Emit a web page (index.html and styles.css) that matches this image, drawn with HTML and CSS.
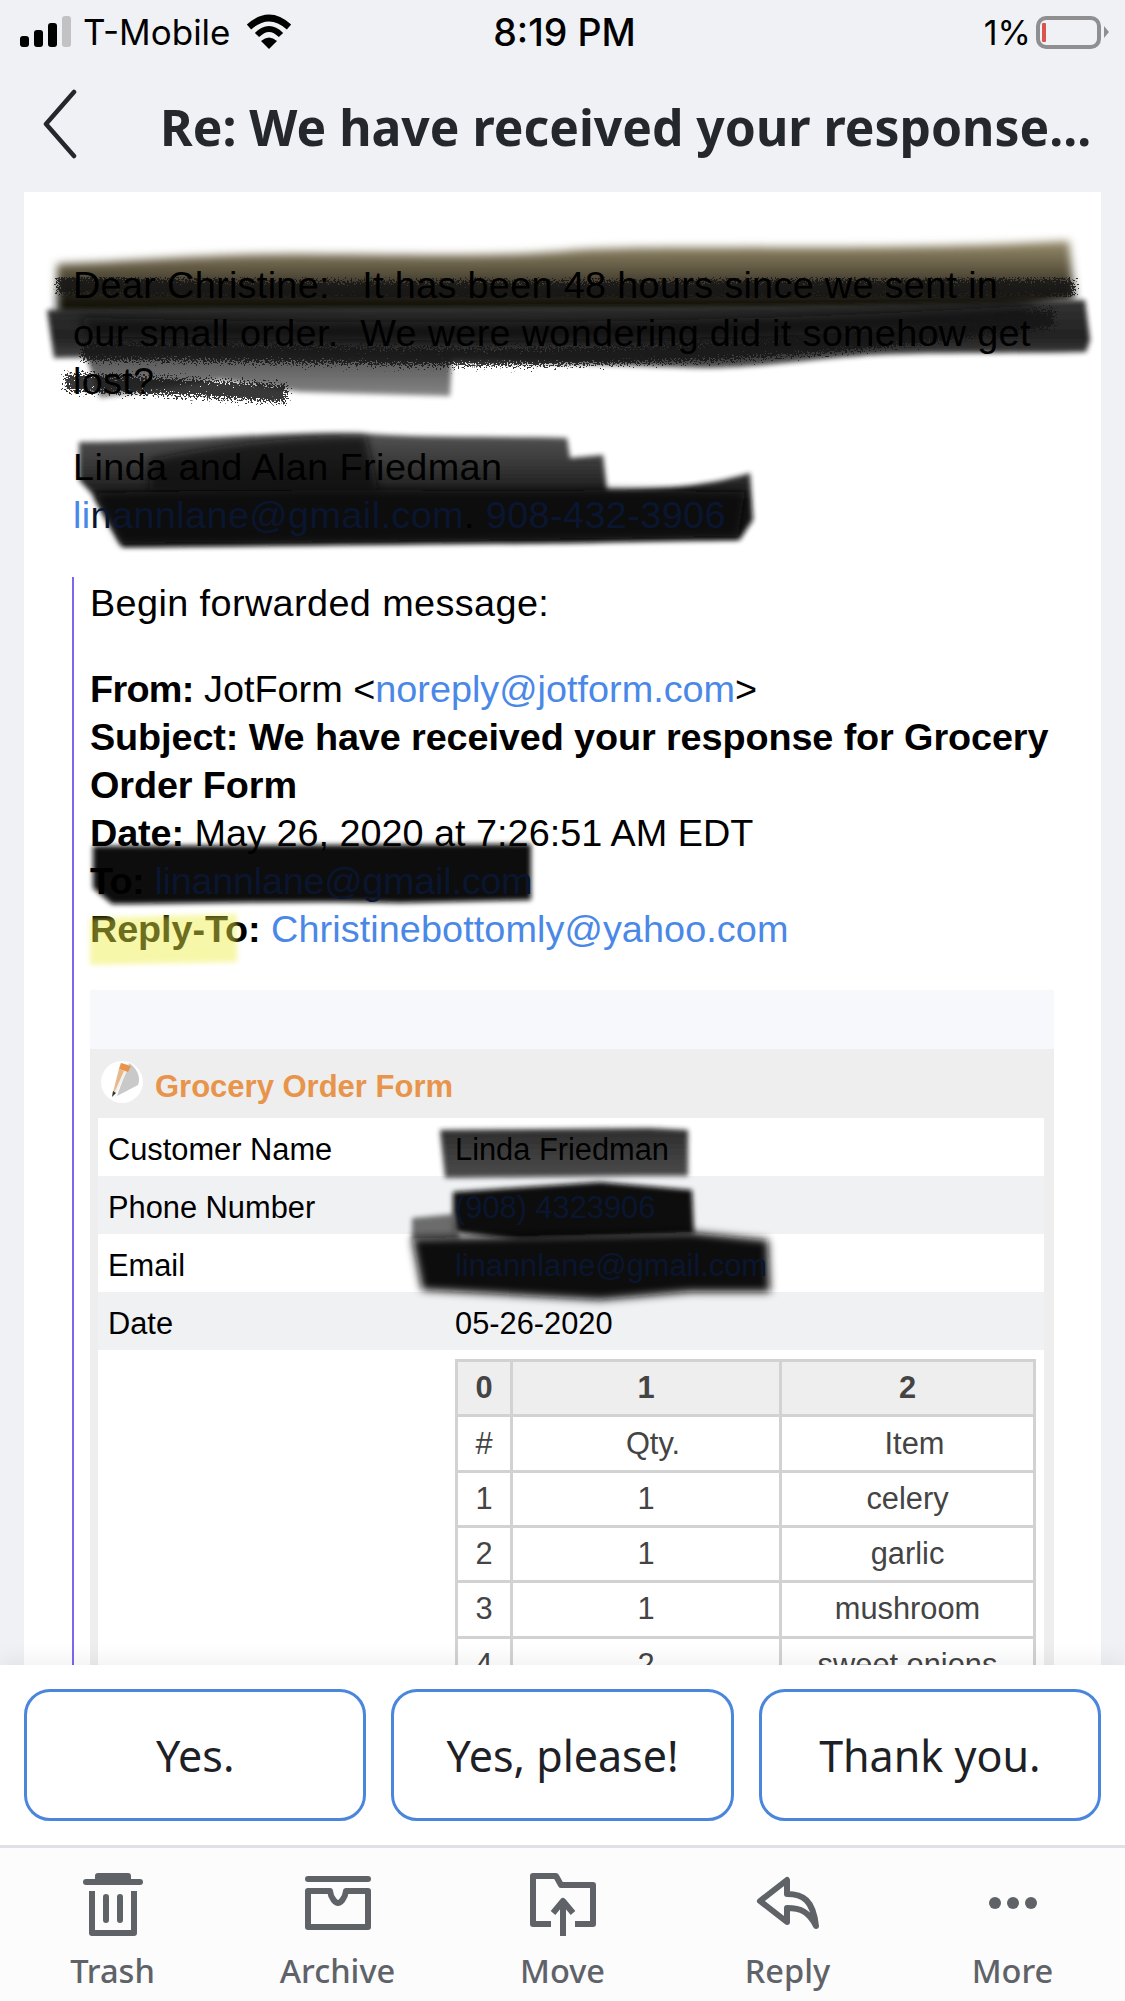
FILE: index.html
```html
<!DOCTYPE html>
<html lang="en">
<head>
<meta charset="utf-8">
<title>Re: We have received your response</title>
<link rel="stylesheet" href="styles.css">
</head>
<body>
<div class="page">
  <header class="status">
    <div class="status-left">
      <svg class="signal" viewBox="0 0 52 32"><rect x="0" y="20" width="9" height="11" rx="3"/><rect x="14" y="14" width="9" height="17" rx="3"/><rect x="28" y="7" width="9" height="24" rx="3"/><rect class="signal-off" x="42" y="0" width="9" height="31" rx="3"/></svg>
      <span class="carrier">T-Mobile</span>
      <svg class="wifi" viewBox="0 0 46 36"><path d="M3 13Q23 -5 43 13" fill="none" stroke="#000" stroke-width="6.5"/><path d="M11 21Q23 9 35 21" fill="none" stroke="#000" stroke-width="6"/><path d="M15 27Q23 20 31 27L23 35Z"/></svg>
    </div>
    <span class="clock">8:19 PM</span>
    <div class="status-right">
      <span class="percent">1%</span>
      <div class="battery"><span class="battery-level"></span></div>
      <span class="battery-nub"></span>
    </div>
  </header>

  <nav class="navbar">
    <svg class="back" viewBox="0 0 40 70"><path d="M34 3L6 35L34 67" fill="none" stroke="#24272b" stroke-width="4.5" stroke-linecap="round" stroke-linejoin="round"/></svg>
    <h1 class="subject">Re: We have received your response...</h1>
  </nav>

  <main class="card">
    <p class="para opening inked">Dear Christine:&nbsp;&nbsp;&nbsp;It has been 48 hours since we sent in<br>our small order.&nbsp;&nbsp;We were wondering did it somehow get<br>lost?</p>
    <p class="para plain sign"><span class="inked">Linda and Alan Friedman</span><br><a class="link">li</a><a class="inked link-dark">nannlane@gmail.com</a><span class="inked black">.</span><span class="inked link-dark"> 908-432-3906</span></p>
    <section class="quote">
      <p class="para plain begin">Begin forwarded message:</p>
      <p class="para headers"><b class="tight">From:</b> JotForm &lt;<a class="link">noreply@jotform.com</a>&gt;<br>
      <b>Subject: We have received your response for Grocery Order Form</b><br>
      <b class="inked">Date:</b> <span class="inked">May 26, 2020 at 7:26:51 AM EDT</span><br>
      <b class="inked tight">To:</b> <a class="inked link-dark narrow">linannlane@gmail.com</a><br>
      <b>Reply-To:</b> <a class="link wide">Christinebottomly@yahoo.com</a></p>
      <div class="form">
        <div class="form-strip"></div>
        <div class="form-body">
          <div class="form-head">
            <svg class="pencil" viewBox="0 0 44 44"><circle cx="22" cy="22" r="21" fill="#fff"/><path d="M29 3C37 8 41 17 38 25L17 36Z" fill="#c9c9c9"/><path d="M20 3L30 5L17 32L12 35Z" fill="#f4f1ec"/><path d="M21 3L31 6L28 12L19 9Z" fill="#e8944a"/><path d="M19 9L24 11L15 31L13 33Z" fill="#e6b98c"/><path d="M13 31L16 33L12 37Z" fill="#333"/></svg>
            <h2 class="form-title">Grocery Order Form</h2>
          </div>
          <div class="row"><span>Customer Name</span><span class="inked">Linda Friedman</span></div>
          <div class="row row-alt"><span>Phone Number</span><a class="inked link-dark">(908) 4323906</a></div>
          <div class="row"><span>Email</span><a class="inked link-dark">linannlane@gmail.com</a></div>
          <div class="row row-alt"><span>Date</span><span>05-26-2020</span></div>
          <div class="row row-table">
            <table class="items">
              <thead><tr><th class="col-n">0</th><th class="col-q">1</th><th>2</th></tr></thead>
              <tbody>
                <tr><td>#</td><td class="shift">Qty.</td><td class="shift">Item</td></tr>
                <tr><td>1</td><td>1</td><td>celery</td></tr>
                <tr><td>2</td><td>1</td><td>garlic</td></tr>
                <tr><td>3</td><td>1</td><td>mushroom</td></tr>
                <tr><td>4</td><td>2</td><td>sweet onions</td></tr>
              </tbody>
            </table>
          </div>
        </div>
      </div>
    </section>
  </main>

  <footer class="bottom">
    <div class="replies">
      <button class="chip">Yes.</button>
      <button class="chip">Yes, please!</button>
      <button class="chip">Thank you.</button>
    </div>
    <div class="toolbar">
      <div class="tool">
        <svg class="tool-icon" viewBox="0 0 70 70"><rect x="5" y="9" width="60" height="6" rx="3" class="solid"/><rect x="17" y="3" width="36" height="9" rx="3" class="solid"/><path d="M14 21V63H56V21" class="line"/><path d="M28 27V50M42 27V50" class="line round"/></svg>
        <span>Trash</span>
      </div>
      <div class="tool">
        <svg class="tool-icon" viewBox="0 0 70 70"><rect x="2" y="6" width="66" height="6" rx="3" class="solid"/><path d="M5 21H27C28 29 33 33 35 33C37 33 42 29 43 21H65V57H5Z" class="line"/></svg>
        <span>Archive</span>
      </div>
      <div class="tool">
        <svg class="tool-icon" viewBox="0 0 70 70"><path d="M23 54H5V6H28L33 15H65V54H47" class="line"/><path d="M35 66V31M25 43L35 31L45 43" class="line"/></svg>
        <span>Move</span>
      </div>
      <div class="tool">
        <svg class="tool-icon" viewBox="0 0 70 70"><path d="M7 31L34 10V24C50 24 60 30 63 56C56 42 48 38 34 38V52Z" class="line"/></svg>
        <span>Reply</span>
      </div>
      <div class="tool">
        <svg class="tool-icon" viewBox="0 0 70 70"><circle cx="17" cy="33" r="6" class="solid"/><circle cx="35" cy="33" r="6" class="solid"/><circle cx="53" cy="33" r="6" class="solid"/></svg>
        <span>More</span>
      </div>
    </div>
  </footer>

  <svg class="scribbles" viewBox="0 0 1125 2001" aria-hidden="true">
    <defs>
      <filter id="soft" x="-10%" y="-30%" width="120%" height="160%"><feGaussianBlur stdDeviation="2.5"/></filter>
      <filter id="soft2" x="-10%" y="-30%" width="120%" height="160%"><feGaussianBlur stdDeviation="4"/></filter>
      <filter id="soft3" x="-10%" y="-60%" width="120%" height="220%"><feGaussianBlur stdDeviation="6"/></filter>
      <filter id="rough" x="-5%" y="-100%" width="110%" height="300%">
        <feTurbulence type="fractalNoise" baseFrequency="0.55" numOctaves="2" seed="4"/>
        <feDisplacementMap in="SourceGraphic" scale="22" xChannelSelector="R" yChannelSelector="G"/>
      </filter>
      <linearGradient id="olive" gradientUnits="userSpaceOnUse" x1="0" y1="245" x2="0" y2="302">
        <stop offset="0" stop-color="#8f8465"/><stop offset=".45" stop-color="#5d5540"/><stop offset="1" stop-color="#14120c"/>
      </linearGradient>
      <linearGradient id="band" gradientUnits="userSpaceOnUse" x1="0" y1="300" x2="0" y2="368">
        <stop offset="0" stop-color="#2e2e2e"/><stop offset=".55" stop-color="#1c1c1c"/><stop offset="1" stop-color="#4a4a4a"/>
      </linearGradient>
      <linearGradient id="tail" gradientUnits="userSpaceOnUse" x1="0" y1="355" x2="0" y2="398">
        <stop offset="0" stop-color="#444"/><stop offset="1" stop-color="#7a7a7a"/>
      </linearGradient>
      <linearGradient id="name" gradientUnits="userSpaceOnUse" x1="0" y1="438" x2="0" y2="500">
        <stop offset="0" stop-color="#4a4a4a"/><stop offset="1" stop-color="#101010"/>
      </linearGradient>
      <linearGradient id="cell" gradientUnits="userSpaceOnUse" x1="0" y1="1128" x2="0" y2="1180">
        <stop offset="0" stop-color="#222"/><stop offset="1" stop-color="#444"/>
      </linearGradient>
    </defs>
    <path class="mark-tail" filter="url(#soft)" d="M84 350L452 352L450 396L300 392L220 380L100 398Z"/>
    <path class="mark-olive" filter="url(#soft2)" d="M57 264C120 262 190 255 287 254C400 254 500 258 574 250C640 246 700 248 746 247C860 248 980 246 1069 241L1075 300L1000 312L57 316Z"/>
    <path class="mark-band" filter="url(#soft)" d="M47 310C300 306 700 312 1085 300L1090 340L1086 352C1000 354 900 352 860 356C800 360 760 368 700 368C500 362 300 352 54 358Z"/>
    <path class="mark-streak" filter="url(#soft3)" d="M80 318C300 322 620 330 1030 306L1040 322C700 346 400 340 90 336Z"/>
    <path class="mark-speck" filter="url(#rough)" d="M58 284C300 296 800 286 1074 288"/>
    <path class="mark-speck" filter="url(#rough)" d="M82 352C300 350 420 364 700 352C850 346 950 330 1054 318"/>
    <path class="mark-speck" filter="url(#rough)" d="M66 382C120 384 200 388 286 394"/>
    <path class="mark-name" filter="url(#soft)" d="M79 442C180 442 280 430 370 434C440 438 510 436 567 438L570 458L603 455L607 490C650 490 700 488 750 473L753 520L739 540C650 540 560 544 490 543C370 544 240 546 122 547L93 495L79 480Z"/>
    <path class="mark-wedge" filter="url(#soft2)" d="M150 460C220 444 300 436 366 436L378 490L150 490Z"/>
    <path class="mark-solid" filter="url(#soft2)" d="M95 493C300 488 500 492 606 490L745 492L738 536C500 540 300 542 122 543Z"/>
    <path class="mark-solid" filter="url(#soft)" d="M93 846L531 844L531 900L400 903C300 900 200 904 112 904L93 888Z"/>
    <path class="mark-yellow" filter="url(#soft)" d="M90 918L237 914L237 962L90 965Z"/>
    <path class="mark-cell" filter="url(#soft)" d="M440 1130L650 1128L688 1130L688 1176L640 1176L445 1178Z"/>
    <path class="mark-solid" filter="url(#soft)" d="M453 1192L600 1182L692 1190L694 1234L520 1240L453 1232Z"/>
    <path class="mark-gray" filter="url(#soft)" d="M412 1218L455 1214L460 1240L412 1240Z"/>
    <path class="mark-solid" filter="url(#soft2)" d="M412 1238L690 1232L768 1240L770 1292L690 1292L600 1300L422 1290Z"/>
  </svg>
</div>
</body>
</html>
```
FILE: styles.css
```css
* { box-sizing: border-box; }
html, body { margin: 0; padding: 0; }
body { background: #f0f1f4; }

.page {
  position: relative;
  width: 1125px;
  height: 2001px;
  overflow: hidden;
  display: flex;
  flex-direction: column;
  background: #f0f1f4;
}

/* status bar */
.status {
  height: 64px;
  padding: 0 16px 0 20px;
  display: grid;
  grid-template-columns: 1fr auto 1fr;
  align-items: center;
  font-family: Inter, "Liberation Sans", sans-serif;
  color: #000;
  flex: none;
}
.status-left { display: flex; align-items: center; }
.signal { width: 52px; height: 32px; }
.signal-off { fill: #c2c2c4; }
.carrier { margin-left: 11px; font-size: 35px; }
.wifi { width: 46px; height: 36px; margin-left: 15px; }
.clock { font-size: 37.5px; font-weight: 500; }
.status-right { display: flex; align-items: center; justify-content: flex-end; }
.percent { font-size: 34px; margin-right: 5px; }
.battery {
  width: 65px;
  height: 33px;
  border: 4px solid #8f8f92;
  border-radius: 10px;
  padding: 3px 2px;
}
.battery-level { display: block; width: 4px; height: 100%; background: #d9534f; border-radius: 1px; }
.battery-nub {
  width: 0;
  height: 0;
  margin-left: 3px;
  border-left: 5px solid #8f8f92;
  border-top: 6px solid transparent;
  border-bottom: 6px solid transparent;
}

/* title bar */
.navbar {
  height: 128px;
  flex: none;
  display: flex;
  align-items: center;
  padding: 0 0 3px 40px;
}
.back { width: 40px; height: 70px; flex: none; margin: 0 80px 6px 0; }
.subject {
  margin: 0;
  font-family: "Noto Sans", "Open Sans", sans-serif;
  font-size: 49.8px;
  font-weight: 700;
  color: #24272b;
  white-space: nowrap;
}

/* message */
.card {
  flex: 1;
  min-height: 0;
  margin: 0 24px;
  padding: 69px 0 0 48px;
  background: #fff;
  overflow: hidden;
  font-family: "Liberation Sans", Arial, sans-serif;
  font-size: 37.8px;
  line-height: 48.1px;
  color: #000;
}
.para { margin: 0; padding-left: 1px; }
.plain { letter-spacing: .4px; }
.opening { letter-spacing: .32px; }
.sign { margin-top: 38px; }
.link { color: #4a88e8; }
.inked { position: relative; z-index: 2; }
.link-dark { color: #0a1630; }
.black { color: #000; }
.quote {
  margin-top: 38px;
  padding: 2px 0 0 16px;
  border-left: 2px solid #7b68ee;
}
.quote .para { padding: 0; }
.headers { margin-top: 37px !important; padding-right: 40px !important; }
.headers b { letter-spacing: -.1px; }
.headers b.tight { letter-spacing: -.7px; }
.narrow { letter-spacing: -.25px; }
.wide { letter-spacing: .08px; }

.form { width: 964px; margin-top: 37px; }
.form-strip { height: 59px; background: #f7f8fb; }
.form-body { background: #eee; padding: 0 10px 0 8px; }
.form-head { height: 69px; display: flex; align-items: center; padding-left: 2px; }
.pencil { width: 44px; height: 44px; flex: none; margin-right: 11px; margin-top: -4px; }
.form-title { margin: 7px 0 0; font-size: 31px; font-weight: 700; line-height: 40px; color: #e8944a; }
.row {
  height: 58px;
  display: grid;
  grid-template-columns: 347px 1fr;
  align-items: center;
  padding: 5px 0 0 10px;
  background: #fff;
  font-size: 30.8px;
  line-height: 40px;
}
.row-alt { background: #f0f1f3; }
.row-table {
  display: block;
  height: auto;
  padding: 9px 8px 0 357px;
}
.items {
  width: 581px;
  border-collapse: collapse;
  table-layout: fixed;
  font-size: 30.8px;
  line-height: 38px;
  color: #444;
  text-align: center;
}
.items th, .items td { border: 3px solid #d2d2d2; height: 55.3px; padding: 0; }
.items th { background: #eee; font-weight: 700; }
.col-n { width: 55px; }
.col-q { width: 269px; }
.shift { padding-left: 14px !important; }

/* bottom panel */
.bottom {
  position: relative;
  z-index: 3;
  height: 336px;
  flex: none;
  display: flex;
  flex-direction: column;
  background: #fff;
  box-shadow: 0 -8px 18px rgba(0, 0, 0, .05);
  font-family: "Noto Sans", "Open Sans", sans-serif;
}
.replies {
  height: 183px;
  flex: none;
  padding: 24px 24px 0;
  display: grid;
  grid-template-columns: repeat(3, 1fr);
  column-gap: 25px;
  align-items: start;
  border-bottom: 3px solid #dfe1e6;
}
.chip {
  height: 132px;
  border: 3px solid #4a86dc;
  border-radius: 26px;
  background: #fff;
  font-family: inherit;
  font-size: 43px;
  color: #1d2125;
}
.toolbar {
  flex: 1;
  display: grid;
  grid-template-columns: repeat(5, 1fr);
  background: #fcfcfd;
}
.tool {
  display: flex;
  flex-direction: column;
  align-items: center;
  padding-top: 22px;
  font-size: 32.6px;
  font-weight: 500;
  color: #5f6368;
}
.tool span { margin-top: 10px; line-height: 42px; }
.tool-icon { width: 70px; height: 70px; }
.solid { fill: #5f6368; }
.line { fill: none; stroke: #5f6368; stroke-width: 6; stroke-linejoin: round; }
.round { stroke-linecap: round; }

/* ink drawn over the screenshot */
.scribbles { position: absolute; left: 0; top: 0; width: 1125px; height: 2001px; z-index: 1; pointer-events: none; }
.mark-olive { fill: url(#olive); }
.mark-band { fill: url(#band); opacity: .97; }
.mark-streak { fill: #111; opacity: .8; }
.mark-tail { fill: url(#tail); opacity: .9; }
.mark-speck { fill: none; stroke: #161616; stroke-width: 17; opacity: .85; }
.mark-name { fill: url(#name); opacity: .97; }
.mark-wedge { fill: #0c0c0c; opacity: .75; }
.mark-cell { fill: url(#cell); opacity: .95; }
.mark-solid { fill: #0a0a0a; }
.mark-gray { fill: #555; opacity: .85; }
.mark-yellow { fill: #eeee47; opacity: .46; }
```
